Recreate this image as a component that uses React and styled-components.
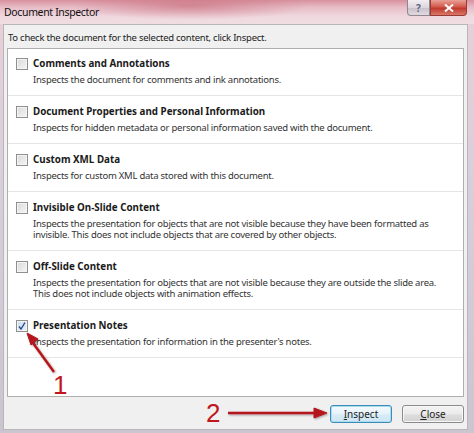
import React from 'react';
import styled, { createGlobalStyle } from 'styled-components';

const GlobalStyle = createGlobalStyle`
  html, body {
    margin: 0;
    padding: 0;
    background: #ffffff;
  }
`;

const Window = styled.div`
  position: relative;
  width: 474px;
  height: 433px;
  display: flex;
  flex-direction: column;
  background: linear-gradient(to bottom, #e9cfd6 0%, #d9cfdc 40%, #cbc5d0 100%);
  font-family: 'Noto Sans', 'Open Sans', sans-serif;
  overflow: hidden;
`;

const TitleBar = styled.div`
  height: 24px;
  flex: none;
  display: flex;
  align-items: flex-start;
  justify-content: space-between;
  background:
    radial-gradient(ellipse 120px 14px at 190px 6px, rgba(196, 96, 112, 0.55), rgba(196, 96, 112, 0)),
    linear-gradient(to bottom, #d7909d 0%, #e7bdc7 30%, #f0d9df 70%, #efdde2 100%);
`;

const Caption = styled.div`
  padding: 5px 0 0 4px;
  font-size: 10.5px;
  letter-spacing: -0.35px;
  line-height: 14px;
  color: #111;
`;

const Controls = styled.div`
  display: flex;
  margin-right: 7px;
`;

const CtrlButton = styled.div`
  height: 16px;
  width: ${(p) => p.w}px;
  display: flex;
  align-items: center;
  justify-content: center;
  font-size: 10px;
  font-weight: bold;
  border: 1px solid ${(p) => (p.close ? '#9a3a34' : '#8f8890')};
  border-top: none;
  box-sizing: border-box;
  color: ${(p) => (p.close ? '#fff' : '#5a6680')};
  border-radius: ${(p) => (p.close ? '0 0 4px 0' : '0 0 0 4px')};
  background: ${(p) =>
    p.close
      ? 'linear-gradient(to bottom, #e8a096 0%, #d35a4c 45%, #c0392d 55%, #d9796a 100%)'
      : 'linear-gradient(to bottom, #f2eef2 0%, #ddd6dd 50%, #cac2cb 55%, #e0dae0 100%)'};
`;

const Body = styled.div`
  flex: 1;
  margin: 0 6px 3px 3px;
  display: flex;
  flex-direction: column;
  padding: 0 3px;
  background: #f0f0f0;
  border: 1px solid #b9b6bb;
  font-size: 9.5px;
`;

const Intro = styled.div`
  padding: 6px 0 0 1px;
  line-height: 13px;
  letter-spacing: -0.25px;
  color: #222;
  margin-bottom: 4px;
`;

const Panel = styled.div`
  flex: 1;
  background: #fff;
  border: 1px solid #aeaeae;
`;

const Row = styled.div`
  display: flex;
  gap: 5px;
  padding: ${(p) => (p.first ? '8px' : '9px')} 8px 10px 8px;
  border-bottom: 1px solid #e6e6e6;
`;

const Check = styled.div`
  flex: none;
  width: 12px;
  height: 12px;
  margin-top: 1px;
  box-sizing: border-box;
  border: 1px solid #8e8f8f;
  background: ${(p) =>
    p.checked
      ? 'linear-gradient(135deg, #c9dcef 0%, #e9f1fa 100%)'
      : 'linear-gradient(135deg, #d9d9d9 0%, #f6f6f6 100%)'};
  box-shadow: inset 0 0 0 1px #f4f4f4;
  display: flex;
  align-items: center;
  justify-content: center;
`;

const Texts = styled.div`
  display: flex;
  flex-direction: column;
  gap: 3px;
`;

const ItemTitle = styled.div`
  font-weight: bold;
  font-size: 9.8px;
  line-height: 14px;
  color: #1a1a1a;
`;

const ItemDesc = styled.div`
  line-height: 11px;
  letter-spacing: -0.25px;
  color: #333;
  max-width: 405px;
`;

const Footer = styled.div`
  display: flex;
  justify-content: flex-end;
  gap: 10px;
  padding: 8px 0 6px;
`;

const Button = styled.div`
  width: 62px;
  height: 18px;
  box-sizing: border-box;
  display: flex;
  align-items: center;
  justify-content: center;
  font-size: 10px;
  color: #222;
  border-radius: 3px;
  border: 1px solid ${(p) => (p.primary ? '#3c8cb8' : '#8a8a8a')};
  box-shadow: ${(p) => (p.primary ? '0 0 0 1px #a9dcef inset' : 'inset 0 0 0 1px #f8f8f8')};
  background: ${(p) =>
    p.primary
      ? 'linear-gradient(to bottom, #f4fafd 0%, #e6f3fb 50%, #d6ebf6 55%, #cfe6f3 100%)'
      : 'linear-gradient(to bottom, #f3f3f3 0%, #ebebeb 50%, #dddddd 55%, #d2d2d2 100%)'};

  u {
    text-decoration: underline;
    text-underline-offset: 1px;
  }
`;

const Annotations = styled.svg`
  position: absolute;
  left: 0;
  top: 0;
  pointer-events: none;
`;

const Number = styled.span`
  position: absolute;
  left: ${(p) => p.x}px;
  top: ${(p) => p.y}px;
  font-family: 'Liberation Sans', Arial, sans-serif;
  font-size: 26px;
  line-height: 26px;
  color: #c0171c;
`;

const items = [
  {
    title: 'Comments and Annotations',
    desc: 'Inspects the document for comments and ink annotations.',
  },
  {
    title: 'Document Properties and Personal Information',
    desc: 'Inspects for hidden metadata or personal information saved with the document.',
  },
  {
    title: 'Custom XML Data',
    desc: 'Inspects for custom XML data stored with this document.',
  },
  {
    title: 'Invisible On-Slide Content',
    desc: 'Inspects the presentation for objects that are not visible because they have been formatted as invisible. This does not include objects that are covered by other objects.',
  },
  {
    title: 'Off-Slide Content',
    desc: 'Inspects the presentation for objects that are not visible because they are outside the slide area. This does not include objects with animation effects.',
  },
  {
    title: 'Presentation Notes',
    desc: "Inspects the presentation for information in the presenter's notes.",
    checked: true,
  },
];

export default function App() {
  return (
    <>
      <GlobalStyle />
      <Window>
        <TitleBar>
          <Caption>Document Inspector</Caption>
          <Controls>
            <CtrlButton w={23}>?</CtrlButton>
            <CtrlButton w={37} close>
              <svg width="10" height="8" viewBox="0 0 10 8">
                <path d="M1 0.5 L9 7.5 M9 0.5 L1 7.5" stroke="#fff" strokeWidth="2" />
              </svg>
            </CtrlButton>
          </Controls>
        </TitleBar>
        <Body>
          <Intro>To check the document for the selected content, click Inspect.</Intro>
          <Panel>
            {items.map((it, i) => (
              <Row key={it.title} first={i === 0}>
                <Check checked={it.checked}>
                  {it.checked && (
                    <svg width="8" height="8" viewBox="0 0 8 8">
                      <path d="M1 4.5 L3 7 L7 0.5" stroke="#2b4a8c" strokeWidth="1.4" fill="none" />
                    </svg>
                  )}
                </Check>
                <Texts>
                  <ItemTitle>{it.title}</ItemTitle>
                  <ItemDesc>{it.desc}</ItemDesc>
                </Texts>
              </Row>
            ))}
          </Panel>
          <Footer>
            <Button primary>
              <span>
                <u>I</u>nspect
              </span>
            </Button>
            <Button>
              <span>
                <u>C</u>lose
              </span>
            </Button>
          </Footer>
        </Body>

        <Annotations width="474" height="433" viewBox="0 0 474 433">
          <defs>
            <filter id="sh" x="-20%" y="-20%" width="140%" height="140%">
              <feDropShadow dx="1" dy="1" stdDeviation="1" floodColor="#000" floodOpacity="0.35" />
            </filter>
          </defs>
          <g filter="url(#sh)" fill="#b5161b" stroke="#b5161b">
            <line x1="54" y1="372" x2="33" y2="343" strokeWidth="2.5" />
            <polygon points="27,333 38,339 31,345" strokeWidth="1" />
            <line x1="228" y1="413" x2="316" y2="413" strokeWidth="2.5" />
            <polygon points="327,413 314,408 314,418" strokeWidth="1" />
          </g>
        </Annotations>
        <Number x={53} y={372}>1</Number>
        <Number x={206} y={400}>2</Number>
      </Window>
    </>
  );
}
